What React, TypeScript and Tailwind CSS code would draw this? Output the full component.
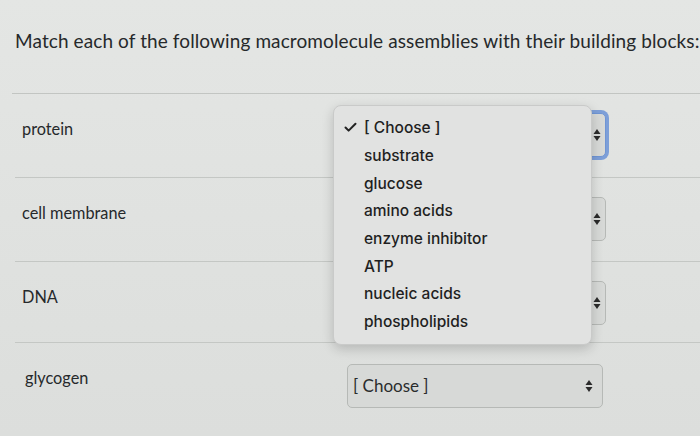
import { Check } from "lucide-react";

const rows = [
  { label: "protein", h: "h-[84px]", focused: true },
  { label: "cell membrane", h: "h-[84px]", focused: false },
  { label: "DNA", h: "h-[81px]", focused: false },
  { label: "glycogen", h: "h-[93px]", focused: false },
];

const options = [
  "[ Choose ]",
  "substrate",
  "glucose",
  "amino acids",
  "enzyme inhibitor",
  "ATP",
  "nucleic acids",
  "phospholipids",
];

function UpDown() {
  return (
    <svg width="8" height="14" viewBox="0 0 8 14" className="shrink-0">
      <path d="M4 1 L7.5 6 H0.5 Z" fill="#2b2b2b" />
      <path d="M4 13 L7.5 8 H0.5 Z" fill="#2b2b2b" />
    </svg>
  );
}

function Select({ focused, showValue }: { focused: boolean; showValue: boolean }) {
  return (
    <div
      className={`flex items-center justify-between h-[44px] rounded-[5px] border bg-[#d7d9d7] pl-[5px] ${
        showValue ? "w-[256px] pr-[9px]" : "w-[259px] pr-[4px]"
      } ${focused ? "border-[#6f95d4] ring-[3px] ring-[#7d9fd8]" : "border-[#b6b9b6]"}`}
    >
      <span className="text-[17px] text-[#2a2c2d]">{showValue ? "[ Choose ]" : ""}</span>
      <UpDown />
    </div>
  );
}

function OptionMenu() {
  return (
    <div className="absolute left-[-14px] top-[-8px] w-[259px] rounded-[8px] border border-[#c9cac9] bg-[#e1e2e1] shadow-[0_4px_12px_rgba(0,0,0,0.18)] py-[8px] z-10 font-['Inter',sans-serif]">
      {options.map((o, i) => (
        <div key={o} className="flex items-center h-[27.7px] text-[15.5px] font-medium text-[#1f1f1f]">
          <span className="w-[30px] flex justify-end pr-[6px]">
            {i === 0 && <Check size={15} strokeWidth={3.2} color="#222" />}
          </span>
          <span>{o}</span>
        </div>
      ))}
    </div>
  );
}

export default function App() {
  return (
    <div className="w-[700px] h-[436px] overflow-hidden bg-gradient-to-b from-[#e4e6e4] to-[#dcdedc] font-['Lato',sans-serif] text-[#26292b]">
      <div className="h-[94px] ml-[12px] pl-[3px] pt-[27px] border-b border-[#c2c5c2]">
        <h1 className="text-[19px] leading-[28px] tracking-[0.1px] text-[#26292b] whitespace-nowrap">
          Match each of the following macromolecule assemblies with their building blocks:
        </h1>
      </div>
      <div className="pl-[15px]">
        {rows.map((r, i) => (
          <div
            key={r.label}
            className={`${r.h} flex ${i < rows.length - 1 ? "border-b border-[#c4c7c4]" : ""}`}
          >
            <div
              className={`w-[332px] pt-[24px] text-[16.3px] leading-[22px] ${
                i === 3 ? "pl-[10px]" : "pl-[7px]"
              }`}
            >
              {r.label}
            </div>
            <div className={i === 3 ? "pt-[21px]" : "pt-[19px]"}>
              <div className="relative">
                <Select focused={r.focused} showValue={i === 3} />
                {i === 0 && <OptionMenu />}
              </div>
            </div>
          </div>
        ))}
      </div>
    </div>
  );
}
